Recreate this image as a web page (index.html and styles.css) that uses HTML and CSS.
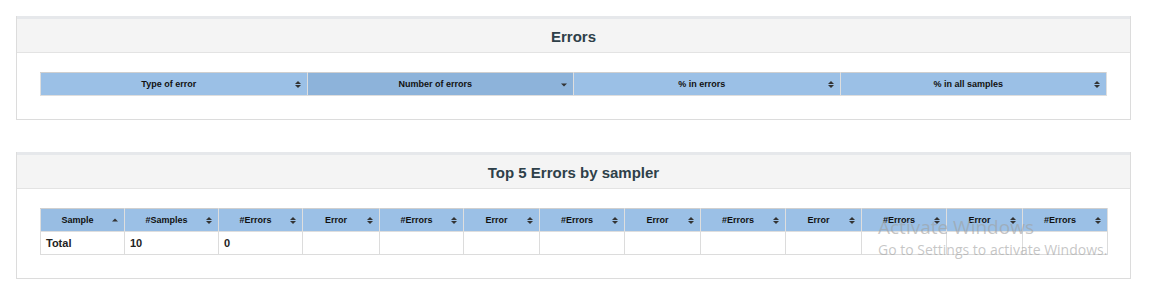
FILE: index.html
```html
<!DOCTYPE html>
<html>
<head>
<meta charset="utf-8">
<link rel="stylesheet" href="styles.css">
</head>
<body>
<div class="page">
  <section class="panel">
    <div class="panel-heading">Errors</div>
    <div class="panel-body">
      <table class="grid grid-errors">
        <thead>
          <tr>
            <th>Type of error<svg class="sort" viewBox="0 0 6 9"><polygon points="0,4 3,1 6,4"/><polygon points="0,5 3,8 6,5"/></svg></th>
            <th class="sorted">Number of errors<svg class="sort" viewBox="0 0 6 9"><polygon points="0,3.5 3,6.5 6,3.5"/></svg></th>
            <th>% in errors<svg class="sort" viewBox="0 0 6 9"><polygon points="0,4 3,1 6,4"/><polygon points="0,5 3,8 6,5"/></svg></th>
            <th>% in all samples<svg class="sort" viewBox="0 0 6 9"><polygon points="0,4 3,1 6,4"/><polygon points="0,5 3,8 6,5"/></svg></th>
          </tr>
        </thead>
      </table>
    </div>
  </section>

  <section class="panel">
    <div class="panel-heading">Top 5 Errors by sampler</div>
    <div class="panel-body">
      <table class="grid grid-top">
        <thead>
          <tr>
            <th class="sorted-asc">Sample<svg class="sort" viewBox="0 0 6 9"><polygon points="0,5.5 3,2.5 6,5.5"/></svg></th>
            <th>#Samples<svg class="sort" viewBox="0 0 6 9"><polygon points="0,4 3,1 6,4"/><polygon points="0,5 3,8 6,5"/></svg></th>
            <th>#Errors<svg class="sort" viewBox="0 0 6 9"><polygon points="0,4 3,1 6,4"/><polygon points="0,5 3,8 6,5"/></svg></th>
            <th>Error<svg class="sort" viewBox="0 0 6 9"><polygon points="0,4 3,1 6,4"/><polygon points="0,5 3,8 6,5"/></svg></th>
            <th>#Errors<svg class="sort" viewBox="0 0 6 9"><polygon points="0,4 3,1 6,4"/><polygon points="0,5 3,8 6,5"/></svg></th>
            <th>Error<svg class="sort" viewBox="0 0 6 9"><polygon points="0,4 3,1 6,4"/><polygon points="0,5 3,8 6,5"/></svg></th>
            <th>#Errors<svg class="sort" viewBox="0 0 6 9"><polygon points="0,4 3,1 6,4"/><polygon points="0,5 3,8 6,5"/></svg></th>
            <th>Error<svg class="sort" viewBox="0 0 6 9"><polygon points="0,4 3,1 6,4"/><polygon points="0,5 3,8 6,5"/></svg></th>
            <th>#Errors<svg class="sort" viewBox="0 0 6 9"><polygon points="0,4 3,1 6,4"/><polygon points="0,5 3,8 6,5"/></svg></th>
            <th>Error<svg class="sort" viewBox="0 0 6 9"><polygon points="0,4 3,1 6,4"/><polygon points="0,5 3,8 6,5"/></svg></th>
            <th>#Errors<svg class="sort" viewBox="0 0 6 9"><polygon points="0,4 3,1 6,4"/><polygon points="0,5 3,8 6,5"/></svg></th>
            <th>Error<svg class="sort" viewBox="0 0 6 9"><polygon points="0,4 3,1 6,4"/><polygon points="0,5 3,8 6,5"/></svg></th>
            <th>#Errors<svg class="sort" viewBox="0 0 6 9"><polygon points="0,4 3,1 6,4"/><polygon points="0,5 3,8 6,5"/></svg></th>
          </tr>
        </thead>
        <tbody>
          <tr>
            <td>Total</td><td>10</td><td>0</td><td></td><td></td><td></td><td></td><td></td><td></td><td></td><td></td><td></td><td></td>
          </tr>
        </tbody>
      </table>
    </div>
  </section>
</div>
<div class="watermark">
  <div class="wm-title">Activate Windows</div>
  <div class="wm-sub">Go to Settings to activate Windows.</div>
</div>
</body>
</html>
```
FILE: styles.css
```css
html, body {
  margin: 0;
  padding: 0;
  background: #ffffff;
  font-family: "Liberation Sans", Arial, sans-serif;
  color: #222;
}

.page {
  padding: 16px 18px 0 16px;
  display: flex;
  flex-direction: column;
  gap: 32px;
}

.panel {
  border: 1px solid #dcdcdc;
  border-top: none;
  background: #fff;
}

.panel-heading {
  background: #f4f4f4;
  border-top: 3px solid #e6e8eb;
  border-bottom: 1px solid #e3e3e3;
  height: 30px;
  padding-top: 3px;
  display: flex;
  align-items: center;
  justify-content: center;
  font-size: 15px;
  line-height: 18px;
  font-weight: bold;
  color: #2e4049;
}

.panel-body {
  padding: 19px 23px 23px 23px;
}

.grid {
  width: 100%;
  border-collapse: collapse;
  table-layout: fixed;
}

.grid th {
  position: relative;
  height: 23px;
  box-sizing: border-box;
  padding: 0 16px 0 6px;
  background: #9bc0e6;
  border: 1px solid #dedede;
  border-top-color: #cfcfcf;
  font-size: 9px;
  line-height: 11px;
  font-weight: bold;
  color: #111;
  text-align: center;
  white-space: nowrap;
}

.grid th.sorted {
  background: #8db3da;
}

.grid th.sorted-asc {
  background: #98bde3;
}

.grid td {
  height: 23px;
  box-sizing: border-box;
  padding: 0 5px;
  border: 1px solid #dcdcdc;
  font-size: 11px;
  line-height: 13px;
  font-weight: bold;
  color: #222;
}

.sort {
  position: absolute;
  right: 6px;
  top: 7px;
  width: 6px;
  height: 9px;
  fill: #333;
}

.grid-top th:nth-child(1) { width: 84px; }
.grid-top th:nth-child(2) { width: 94px; }
.grid-top th:nth-child(3) { width: 84px; }
.grid-top th:nth-child(4) { width: 77px; }
.grid-top th:nth-child(5) { width: 84px; }
.grid-top th:nth-child(6) { width: 76px; }
.grid-top th:nth-child(7) { width: 85px; }
.grid-top th:nth-child(8) { width: 76px; }
.grid-top th:nth-child(9) { width: 85px; }
.grid-top th:nth-child(10) { width: 76px; }
.grid-top th:nth-child(11) { width: 85px; }
.grid-top th:nth-child(12) { width: 76px; }
.grid-top th:nth-child(13) { width: 85px; }

.watermark {
  position: absolute;
  left: 878px;
  top: 215px;
  font-family: "Open Sans", "Liberation Sans", sans-serif;
  color: rgba(160, 160, 160, 0.6);
  pointer-events: none;
}

.wm-title {
  font-size: 19px;
  line-height: 24px;
}

.wm-sub {
  font-size: 14px;
  line-height: 20px;
  margin-top: 1px;
}
```
